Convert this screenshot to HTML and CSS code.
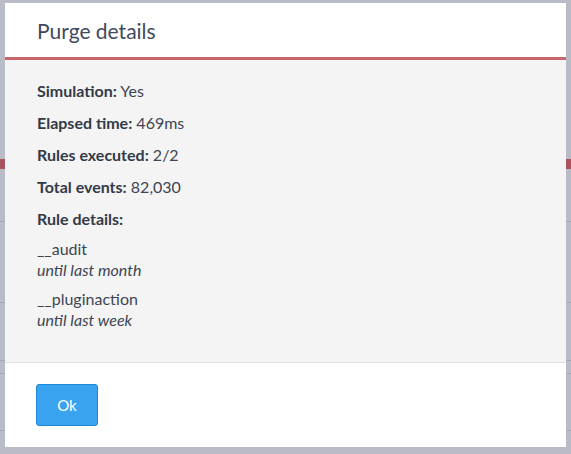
FILE: index.html
```html
<!DOCTYPE html>
<html lang="en">
<head>
    <meta charset="UTF-8">
    <meta name="viewport" content="width=device-width, initial-scale=1.0">
    <title>Purge details</title>
    <link rel="stylesheet" href="styles.css">
</head>
<body>
    <div class="page">
        <div class="page-bar"></div>
        <div class="page-row first"></div>
        <div class="page-row second"></div>
        <div class="page-row third"></div>
        <div class="page-row fourth"></div>
        <div class="page-row fifth"></div>
    </div>

    <div class="modal">
        <div class="modal-header">
            <h2>Purge details</h2>
        </div>
        <div class="modal-body">
            <p><b>Simulation:</b> Yes</p>
            <p><b>Elapsed time:</b> 469ms</p>
            <p><b>Rules executed:</b> 2/2</p>
            <p><b>Total events:</b> 82,030</p>
            <p class="last"><b>Rule details:</b></p>
            <div class="rule">
                <div>__audit</div>
                <i>until last month</i>
            </div>
            <div class="rule">
                <div>__pluginaction</div>
                <i>until last week</i>
            </div>
        </div>
        <div class="modal-footer">
            <button id="ok">Ok</button>
        </div>
    </div>
</body>
</html>
```

FILE: styles.css
```css
body {
    margin: 0;
    background-color: #b9bcc7;
    font-family: Lato, "Open Sans", sans-serif;
    color: #3d4552;
}
.page {
    height: 454px;
    padding-top: 159px;
    box-sizing: border-box;
}
.page-bar {
    height: 10px;
    background-color: #a8545e;
}
.page-row {
    height: 1px;
    background-color: #a4a8b3;
}
.page-row.first { margin-top: 52px; }
.page-row.second { margin-top: 80px; }
.page-row.third { margin-top: 57px; }
.page-row.fourth { margin-top: 12px; }
.page-row.fifth { margin-top: 56px; }
.modal {
    position: absolute;
    top: 3px;
    left: 5px;
    width: 561px;
    height: 444px;
    display: flex;
    flex-direction: column;
    background-color: #fff;
}
.modal-header {
    height: 54px;
    border-bottom: 3px solid #c8676b;
    padding: 0 32px;
    display: flex;
    align-items: center;
}
.modal-header h2 {
    margin: 0;
    font-size: 21px;
    font-weight: normal;
    color: #404a5c;
}
.modal-body {
    flex: 1;
    background-color: #f4f4f4;
    border-bottom: 1px solid #e2e2e2;
    padding: 20px 32px 0;
    font-size: 16px;
    line-height: 21px;
}
.modal-body p {
    margin: 0 0 11px;
}
.modal-body p.last {
    margin-bottom: 9px;
}
.modal-body b {
    color: #333a47;
}
.rule {
    margin-bottom: 8px;
}
.modal-footer {
    height: 84px;
    padding: 21px 31px;
    box-sizing: border-box;
}
#ok {
    width: 62px;
    height: 42px;
    border: 1px solid #1e88d6;
    border-radius: 3px;
    background-color: #3aa3ef;
    color: #fff;
    font-family: Lato, "Open Sans", sans-serif;
    font-size: 15px;
    cursor: pointer;
}
```
